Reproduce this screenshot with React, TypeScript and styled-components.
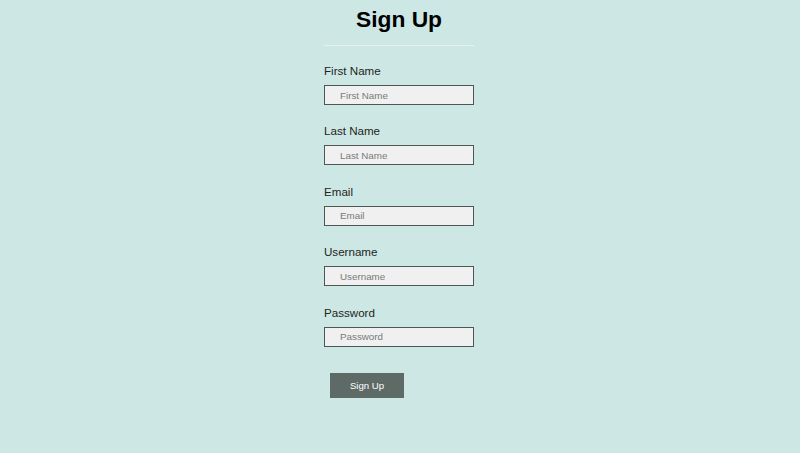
import React from "react";
import styled, { createGlobalStyle } from "styled-components";

const Global = createGlobalStyle`
  html, body {
    margin: 0;
    padding: 0;
    background: #cde8e4;
    font-family: "Liberation Sans", Arial, sans-serif;
  }
  body { min-height: 453px; }
`;

const Form = styled.form`
  width: 150px;
  margin: 0 auto;
  padding-top: 6px;
  display: flex;
  flex-direction: column;
  transform: translateX(-1px);
`;

const Title = styled.h1`
  margin: 0;
  font-size: 22.8px;
  line-height: 26px;
  font-weight: 700;
  color: #000;
  text-align: center;
`;

const Divider = styled.hr`
  margin: 13px 0 18px;
  border: 0;
  border-top: 1px solid #e4f1ef;
  height: 0;
`;

const Field = styled.div`
  display: flex;
  flex-direction: column;
  margin-bottom: 19.4px;
`;

const Label = styled.label`
  font-size: 11.6px;
  line-height: 14px;
  color: #1e2422;
  margin-bottom: 7px;
`;

const Input = styled.input`
  box-sizing: border-box;
  width: 150px;
  height: 20px;
  margin: 0;
  padding: 0 0 0 15px;
  border: 1px solid #505654;
  background: #f0f0f0;
  font-family: "Liberation Sans", Arial, sans-serif;
  font-size: 9.8px;
  color: #333;
  outline: none;
  &::placeholder {
    color: #7a7a7a;
  }
`;

const Button = styled.button`
  align-self: flex-start;
  margin: 7.5px 0 0 6px;
  width: 74px;
  height: 25px;
  border: 0;
  background: #5e6a66;
  color: #fff;
  font-family: "Liberation Sans", Arial, sans-serif;
  font-size: 9.6px;
  cursor: pointer;
`;

const fields = ["First Name", "Last Name", "Email", "Username", "Password"];

export default function App() {
  return (
    <>
      <Global />
      <Form onSubmit={(e) => e.preventDefault()}>
        <Title>Sign Up</Title>
        <Divider />
        {fields.map((f) => (
          <Field key={f}>
            <Label>{f}</Label>
            <Input
              type={f === "Password" ? "password" : f === "Email" ? "email" : "text"}
              placeholder={f}
            />
          </Field>
        ))}
        <Button type="submit">Sign Up</Button>
      </Form>
    </>
  );
}
